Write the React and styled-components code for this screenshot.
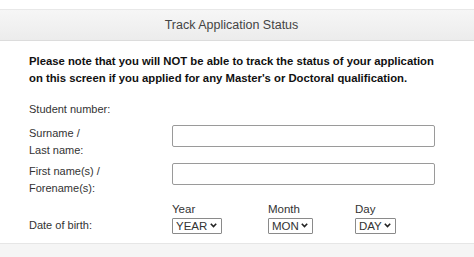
import React from "react";
import styled, { createGlobalStyle } from "styled-components";

const GlobalStyle = createGlobalStyle`
  html, body {
    margin: 0;
    padding: 0;
    background: #ffffff;
    font-family: "Liberation Sans", Arial, sans-serif;
  }
`;

const Page = styled.div`
  width: 474px;
  height: 257px;
  padding-top: 9px;
  box-sizing: border-box;
  display: flex;
  flex-direction: column;
  overflow: hidden;
`;

const Header = styled.div`
  height: 30px;
  border-top: 1px solid #e8e8e8;
  border-bottom: 1px solid #dcdcdc;
  background: linear-gradient(#f6f6f6, #ececec);
  display: flex;
  align-items: center;
  justify-content: center;
  padding-right: 11px;
  font-size: 12.5px;
  color: #444;
`;

const Content = styled.div`
  flex: 1;
  padding: 12px 0 0 29px;
`;

const Notice = styled.p`
  margin: 0 0 14px;
  font-size: 11.3px;
  font-weight: bold;
  line-height: 17px;
  color: #111;
`;

const FormGrid = styled.div`
  display: grid;
  grid-template-columns: 143px 263px;
  font-size: 11px;
  color: #333;
`;

const Label = styled.div`
  line-height: 17px;
  padding-top: ${(p) => p.$top || 0}px;
  margin-bottom: ${(p) => p.$bottom || 0}px;
  align-self: ${(p) => p.$align || "start"};
`;

const InputCell = styled.div`
  padding-top: ${(p) => p.$top || 0}px;
`;

const TextInput = styled.input`
  height: 22px;
  box-sizing: border-box;
  border: 1px solid #9a9a9a;
  border-radius: 2px;
  width: 263px;
  margin: 0;
  padding: 0 4px;
`;

const DateRow = styled.div`
  display: flex;
  align-items: flex-end;
  padding-top: 5px;
`;

const DateField = styled.div`
  width: ${(p) => p.$w}px;
  display: flex;
  flex-direction: column;
  align-items: flex-start;
`;

const DateCaption = styled.span`
  line-height: 14px;
  margin-bottom: 2px;
  font-size: 11.5px;
  color: #333;
`;

const SelectWrap = styled.div`
  position: relative;
  display: inline-block;
`;

const Select = styled.select`
  appearance: none;
  -webkit-appearance: none;
  height: 16px;
  box-sizing: border-box;
  border: 1px solid #8a8a8a;
  border-radius: 1px;
  background: #fff;
  font-family: "Liberation Sans", Arial, sans-serif;
  font-size: 11.5px;
  color: #333;
  padding: 0 12px 0 3px;
  line-height: 14px;
  width: ${(p) => p.$w}px;
  margin: 0;
`;

const Chevron = styled.svg`
  position: absolute;
  right: 5px;
  top: 5px;
  width: 7px;
  height: 5px;
  pointer-events: none;
`;

const Footer = styled.div`
  height: 13px;
  border-top: 1px solid #e6e6e6;
  background: #f5f5f5;
`;

const DropDown = ({ value, width }) => (
  <SelectWrap>
    <Select $w={width} defaultValue={value}>
      <option>{value}</option>
    </Select>
    <Chevron viewBox="0 0 7 5">
      <path d="M0.8 0.8 L3.5 3.6 L6.2 0.8" fill="none" stroke="#222" strokeWidth="1.6" />
    </Chevron>
  </SelectWrap>
);

export default function App() {
  return (
    <>
      <GlobalStyle />
      <Page>
        <Header>Track Application Status</Header>
        <Content>
          <Notice>
            Please note that you will NOT be able to track the status of your application
            <br />
            on this screen if you applied for any Master's or Doctoral qualification.
          </Notice>
          <FormGrid>
            <Label $bottom={7}>Student number:</Label>
            <div />
            <Label>
              Surname /<br />
              Last name:
            </Label>
            <InputCell>
              <TextInput type="text" />
            </InputCell>
            <Label $top={4}>
              First name(s) /<br />
              Forename(s):
            </Label>
            <InputCell $top={4}>
              <TextInput type="text" />
            </InputCell>
            <Label $align="end">Date of birth:</Label>
            <DateRow>
              <DateField $w={96}>
                <DateCaption>Year</DateCaption>
                <DropDown value="YEAR" width={50} />
              </DateField>
              <DateField $w={87}>
                <DateCaption>Month</DateCaption>
                <DropDown value="MON" width={45} />
              </DateField>
              <DateField $w={60}>
                <DateCaption>Day</DateCaption>
                <DropDown value="DAY" width={41} />
              </DateField>
            </DateRow>
          </FormGrid>
        </Content>
        <Footer />
      </Page>
    </>
  );
}
